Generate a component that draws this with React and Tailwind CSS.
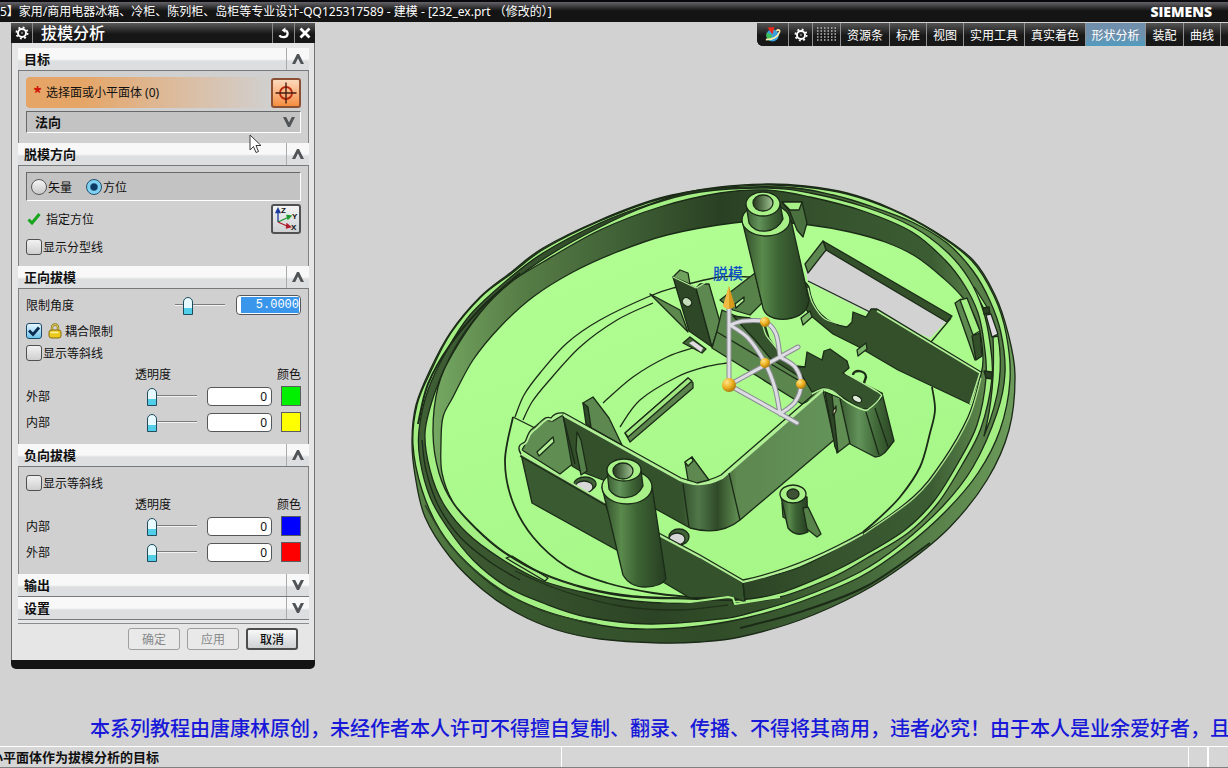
import React, { useState } from 'react';

const TOOLBAR = [
  { label: '资源条', width: 'w-[49px]' },
  { label: '标准', width: 'w-[37px]' },
  { label: '视图', width: 'w-[37px]' },
  { label: '实用工具', width: 'w-[61px]' },
  { label: '真实着色', width: 'w-[61px]' },
  { label: '形状分析', width: 'w-[60px]', active: true },
  { label: '装配', width: 'w-[38px]' },
  { label: '曲线', width: 'w-[37px]' },
];

// Smooth path through a list of points
const curve = (text, closed = false) => {
  const pts = text.trim().split(/\s+/).map((p) => p.split(',').map(Number));
  const n = pts.length;
  const at = (i) => (closed ? pts[(i + n) % n] : pts[Math.max(0, Math.min(n - 1, i))]);
  let d = `M${pts[0][0]},${pts[0][1]}`;
  for (let i = 0; i < (closed ? n : n - 1); i++) {
    const [a, b, c, e] = [at(i - 1), at(i), at(i + 1), at(i + 2)];
    d += `C${b[0] + (c[0] - a[0]) / 6},${b[1] + (c[1] - a[1]) / 6} ${c[0] - (e[0] - b[0]) / 6},${c[1] - (e[1] - b[1]) / 6} ${c[0]},${c[1]}`;
  }
  return closed ? `${d}Z` : d;
};

const OUTER =
  '767,184 805,186 847,193 890,208 934,231 973,260 995,295 1008,333 1015,375 1009,430 987,480 950,527 907,563 860,593 800,620 740,637 700,642 660,643 600,639 557,630 517,613 483,590 450,557 425,517 415,475 412,440 416,405 430,370 450,333 480,297 510,273 543,248 600,220 660,198 720,187';
const RIM =
  '767,185 805,187 847,194 890,209 934,232 972,261 994,296 1006,333 1010,380 1000,430 978,473 945,512 905,547 860,577 800,602 750,617 700,626 660,629 620,628 580,621 537,608 500,590 467,563 440,530 422,490 413,445 417,405 431,371 451,333 481,297 511,274 544,249 600,221 660,199 720,188';
const GROOVE =
  '783,187 833,195 873,207 912,222 947,243 973,271 990,301 1001,333 1005,373 997,413 973,467 943,506 900,545 860,572 800,598 750,613 720,619 650,624 587,617 543,603 507,587 473,560 447,527 430,497 420,460 419,430 428,390 447,350 470,315 505,282 543,253 600,223 650,204 700,190';
const LIP =
  '767,188 810,193 865,207 913,227 947,252 969,279 983,310 990,343 992,378 981,428 962,465 938,503 908,533 867,558 833,577 780,597 735,603 732,598 677,603 633,601 587,593 540,580 500,558 467,533 443,503 430,470 425,433 434,395 450,357 470,325 500,292 545,258 600,227 650,205 700,192';
const WALL =
  '767,190 810,197 863,211 912,232 945,260 965,286 978,313 984,343 986,378 977,425 958,463 934,501 905,530 863,556 830,573 780,593 737,600 690,599 633,597 587,589 540,573 503,552 477,530 453,503 439,473 433,433 438,387 453,353 480,313 510,283 543,262 600,230 660,207 720,193';
const FLOOR =
  '733,223 770,222 810,225 850,232 885,242 915,256 942,277 963,298 978,325 983,358 980,378 968,417 942,462 913,497 863,533 800,567 743,583 710,597 690,598 633,596 587,588 540,572 503,551 477,529 453,502 442,473 441,443 443,417 453,397 473,360 500,327 533,297 573,272 617,252 667,235';

const HANDLE = [
  'M729,385V308M729,385L797,423M729,385L798,347',
  curve('730,325 744,321 765,322 776,334 780,357'),
  curve('730,325 748,338 765,363 775,388 780,414'),
  curve('780,357 795,367 801,384 795,402 780,414'),
].join('');

const Shade = ({ id, stops, y2 = 0, x2 = 1 }) => (
  <linearGradient id={id} x1="0" y1="0" x2={x2} y2={y2}>
    {stops.map(([offset, color]) => (
      <stop key={offset} offset={offset} stopColor={color} />
    ))}
  </linearGradient>
);

const Model = () => (
  <svg viewBox="315 46 913 623" className="block h-auto w-full" role="img" aria-label="三维模型">
    <defs>
      <Shade id="outer" stops={[[0, '#5a8548'], [0.15, '#3a5a30'], [0.5, '#304c28'], [0.75, '#44683a'], [1, '#6d9c5b']]} />
      <Shade id="groove" stops={[[0, '#405f35'], [0.4, '#2c4425'], [0.6, '#35522c'], [0.85, '#5c884b'], [1, '#557c46']]} />
      <Shade id="wall" stops={[[0, '#75a862'], [0.15, '#587f47'], [0.35, '#3e5f35'], [0.52, '#2a4023'], [0.7, '#35522d'], [0.9, '#3c5d33'], [1, '#5d874c']]} />
      <Shade id="floor" x2={0.5} y2={1} stops={[[0, '#b2ff94'], [0.5, '#adfb8e'], [1, '#a6f688']]} />
      <Shade id="round" stops={[[0, '#2d4827'], [0.3, '#5a8a4c'], [0.55, '#3d6434'], [1, '#263d21']]} />
      <Shade id="tube" stops={[[0, '#3a5c31'], [0.35, '#62935a'], [0.7, '#3e6535'], [1, '#2c4626']]} />
      <Shade id="uwall" stops={[[0, '#33502b'], [0.44, '#34522c'], [0.5, '#50774a'], [0.57, '#2f4a28'], [0.64, '#5d884f'], [1, '#64935a']]} />
      <Shade id="hole" stops={[[0, '#27361f'], [0.5, '#5f7f55'], [1, '#a5c598']]} />
      <radialGradient id="gold" cx="0.35" cy="0.3" r="0.8">
        <stop offset="0" stopColor="#ffe48a" />
        <stop offset="0.5" stopColor="#eeb020" />
        <stop offset="1" stopColor="#9a6a08" />
      </radialGradient>
    </defs>

    <g stroke="#1b2b17" strokeWidth="1.3" strokeLinejoin="round">
      {/* Dish rings, outside in */}
      <path d={curve(OUTER, true)} fill="url(#outer)" />
      <path d={curve(RIM, true)} fill="#a4ef84" />
      <path d={curve(GROOVE, true)} fill="url(#groove)" />
      <path d="M993,337L998,336C1003,365 1001,395 984,436C992,405 995,375 993,337z" fill="#a4ef84" />
      <path d="M972,286L975,288 987,307 984,309z" fill="#a4ef84" />
      <path d={curve(LIP, true)} fill="#a4ef84" />
      <path d={curve(WALL, true)} fill="url(#wall)" />
      <path d={curve(FLOOR, true)} fill="url(#floor)" />

      {/* Lines on the rim */}
      <g fill="none">
        <path d={curve('422,440 426,470 438,505 460,537 490,562 520,580')} />
        <path d={curve('418,424 428,384 450,345 482,307 520,273')} strokeWidth="2" />
        <path d={curve('981,378 969,418 943,463 914,498 864,534')} stroke="#a8e38d" />
        <path d={curve('740,628 800,612 867,586 930,543')} strokeWidth="2" />
        <path d={curve('425,505 450,545 490,582 540,610 600,625')} stroke="#2a4223" />
        <path d={curve('515,571 560,590 620,606 680,610 728,605')} stroke="#203319" />
        <path d="M506,558l6,-2 36,22-3,3z" />
      </g>

      {/* Curves on the floor */}
      <g fill="none">
        <path d={curve('515,417 524,395 540,373 567,343 600,320 650,296 677,287 720,277 750,277')} />
        <path d={curve('523,420 532,402 547,383 580,347 617,320 653,303')} />
        <path d={curve('603,403 633,377 667,357 693,348')} />
        <path d={curve('620,427 640,400 677,377 705,367 727,363')} />
        <path d={curve('513,417 505,460 512,500 533,537 567,567 607,583 653,593 690,597')} strokeWidth="1.8" />
        <path d="M513,417L535,428" />
        <path d={curve('932,387 935,410 930,433 920,467 900,497 877,520 863,532')} strokeWidth="1.8" />
      </g>

      {/* Window opening */}
      <path d="M824,247L806,272 808,282 867,312 930,338 948,320z" fill="#d2d2d2" stroke="none" />
      <path d="M823,241L952,316 947,322 826,250z" fill="#33502b" />
      <path d="M823,241L805,264 808,273 826,250z" fill="#5c8850" />
      <path d="M808,281L872,313M951,318L931,342" fill="none" />

      {/* Latch on the right edge */}
      <path d="M955,303L961,299 976,334 980,357 975,360 968,340z" fill="#5d8950" />
      <path d="M960,300L967,298 980,331 973,335z" fill="#a4ef84" />
      <path d="M972,336L980,333 982,356 976,360z" fill="#33502b" />
      <path d="M986,315L991,314 998,334 992,337z" fill="#dedae0" />
      <path d="M983,308l6,-1 1,6 -6,1zM984,371l8,1 0,7 -6,-1z" fill="#2a4023" />

      {/* Rear bracket */}
      <path d="M650,294L680,310 688,332z" fill="#5c884e" />
      <path d="M673,277L680,270 688,273 690,284z" fill="#6fa25d" />
      <path d="M673,277L696,288 712,347 689,331z" fill="#2e4727" />
      <path d="M696,288L700,284 709,284 720,322 712,347z" fill="#5d8950" />
      <path d="M673,277L696,288 705,283" fill="none" stroke="#b2ef98" />
      <ellipse cx="687" cy="302" rx="5" ry="4" transform="rotate(35 687 302)" fill="#c5dcbb" />
      <path d="M683,343L690,337 706,349 702,353z" fill="#436738" />
      <path d="M689,343l4,-2 10,7-2,4z" fill="#e2dce4" stroke="none" />

      {/* Walls behind the tall boss */}
      <path d="M720,300L755,273 762,303 750,315 733,310z" fill="#578249" />
      <path d="M735,304l9,-7v4l-8,7z" fill="#b2ef98" />
      <path d="M712,348L717,331 722,310 745,320 760,336 775,356 788,365 805,367 823,388 815,398 802,404z" fill="#5b864d" />
      <path d="M733,316L750,318 765,325 769,338 783,358 797,367 805,367 818,382 800,377 770,358 755,340z" fill="#35532d" />
      <path d={curve('762,322 766,335 774,345 783,357')} stroke="#b2ef98" fill="none" />
      <path d="M717,332L803,383" fill="none" />

      {/* Long wall on the right */}
      <path d="M798,282Q804,278 809,287C812,310 826,324 847,327L852,322 853,312 866,317 871,309 877,309 981,372 970,404 898,370 857,346 833,334 810,315 803,305z" fill="#33502b" />
      <path d="M877,311L980,373 970,404" fill="none" stroke="#b2ef98" strokeWidth="1.5" />
      <path d={curve('808,288 813,304 825,319 845,325')} stroke="#b2ef98" fill="none" />
      <path d="M801,318l9,-7 2,6-9,8zM857,350l9,-7 1,6-9,7z" fill="#7db769" />

      {/* Tall boss */}
      <path d="M782,202L802,202 807,223 803,237 797,230 790,212z" fill="#49703e" />
      <path d="M782,202L802,202 799,210 790,210z" fill="#a8f088" />
      <path d="M742,220L763,308C766,319 781,321 792,318Q808,314 809,300L791,220z" fill="url(#round)" />
      <ellipse cx="766" cy="220" rx="24" ry="16" fill="#a8f088" />
      <path d="M746,204L749,223C755,235 776,234 783,219L780,204z" fill="url(#tube)" />
      <ellipse cx="763" cy="204" rx="17" ry="12" fill="#a8f088" />
      <ellipse cx="763" cy="203" rx="10" ry="8" fill="url(#hole)" />

      {/* Inner left panel and the front of the box */}
      <path d="M522,450L533,430 545,420 553,421 563,415 572,430 575,462 560,474z" fill="#5f8d52" />
      <path d="M537,452l16,-15 1,5-15,14z" fill="#b2ef98" />
      <path d="M522,452Q517,447 524,444C528,444 527,436 533,431C542,425 544,417 552,420Q556,414 563,414" fill="none" stroke="#b2ef98" strokeWidth="2" />
      <path d="M521,454Q516,446 523,443C527,443 526,434 532,429C541,423 544,415 551,418Q555,412 564,413" fill="none" />

      {/* U shaped wall */}
      <path d="M583,403L593,397 609,418 622,445 590,427z" fill="#5d8950" />
      <path d="M583,403L588,407 591,427 586,424z" fill="#2f4a28" />
      <path d="M563,415L680,480Q700,489 722,478L823,390 834,440 740,520C728,530 712,534 690,528L663,513 603,480 582,472 572,466z" fill="url(#uwall)" />
      <path d="M563,415L680,480Q700,489 722,478L823,390" fill="none" stroke="#b2ef98" strokeWidth="2.4" />
      <path d="M564,413L681,478Q700,486 721,475L822,387M729,473L740,520M683,484L689,527M563,416L575,464" fill="none" />
      <path d="M577,432L581,440 587,471 581,475 576,450z" fill="#557f49" />
      <path d="M685,462L692,457 709,480 697,483 688,480z" fill="#5d8950" />
      <path d="M685,462L692,457 693,461 688,466z" fill="#a8f088" />

      {/* Slanted bar */}
      <path d="M625,433L688,378 693,383 693,388 630,442z" fill="#5b854d" />
      <path d="M625,433L688,378 692,381 628,437z" fill="#a0e782" />

      {/* Holes through the floor */}
      <ellipse cx="585" cy="484" rx="11" ry="7" fill="#42623a" />
      <ellipse cx="584" cy="487" rx="9" ry="6" fill="#d8d8d8" />
      <ellipse cx="679" cy="537" rx="10" ry="8" fill="#42623a" />
      <ellipse cx="677" cy="539" rx="8" ry="6" fill="#d8d8d8" />

      <path d="M521,454L605,503 622,553 532,503z" fill="#3a5a31" />
      <path d="M521,454L606,503" stroke="#b2ef98" strokeWidth="2" />
      <path d="M520,456L605,505" fill="none" />

      {/* Front wall */}
      <path d="M655,533L700,557 743,583 745,602 732,597 690,598 663,582z" fill="#34522c" />
      <path d="M655,533L700,557 743,582Q800,570 863,534" fill="none" stroke="#b2ef98" strokeWidth="2" />
      <path d="M655,531L700,555 743,580Q800,568 863,532" fill="none" />
      <path d="M743,584L745,602" />
      <path d="M660,601L690,602 728,597 733,598 735,604 780,597" fill="none" stroke="#a8f088" strokeWidth="2" />

      {/* Front boss */}
      <path d="M602,487L623,575Q630,587 645,587 661,587 666,579L652,487z" fill="url(#round)" />
      <ellipse cx="627" cy="487" rx="25" ry="17" fill="#a8f088" />
      <path d="M607,470L609,489C615,501 636,501 643,486L641,470z" fill="url(#tube)" />
      <ellipse cx="624" cy="470" rx="17" ry="11" fill="#a8f088" />
      <ellipse cx="623" cy="471" rx="10" ry="8" fill="url(#hole)" />

      {/* Clip */}
      <path d="M825,392L845,400 850,443 837,453z" fill="#5f8d52" />
      <path d="M825,392L832,395 838,452 835,447z" fill="#2e4727" />
      <path d="M833,411l3,-5 0,5-3,5z" fill="#e5cfbb" />
      <path d="M840,399L882,393 894,441C888,448 884,457 875,457L850,444z" fill="url(#tube)" />
      <path d="M866,412L879,455M875,408L888,447" fill="none" />
      <path d="M797,367L805,367 807,352 822,360 824,351 830,349 847,361 849,368 843,373 880,392Q884,395 880,400L869,409 861,409 831,390 823,388 812,392z" fill="#35532d" />
      <path d={curve('812,394 823,389 832,391 847,402 864,410 870,408 880,398 878,392 845,373')} fill="none" stroke="#b2ef98" strokeWidth="1.5" />
      <path d="M853,375C853,369 866,370 866,377L864,383" fill="none" strokeWidth="2.4" />
      <ellipse cx="857" cy="399" rx="5" ry="3" transform="rotate(30 857 399)" fill="#dfeada" />

      {/* Small post */}
      <path d="M782,503L783,517 788,520z" fill="#49703e" />
      <path d="M781,497L788,528Q796,538 808,532L807,497z" fill="url(#round)" />
      <path d="M803,508L808,507 821,534 817,537 807,529z" fill="#578249" />
      <ellipse cx="793" cy="494" rx="13" ry="9" fill="#a8f088" />
      <ellipse cx="793" cy="494" rx="6" ry="5" fill="#3e5236" />
    </g>

    {/* Orientation handle */}
    <g fill="none" strokeLinecap="round">
      <path d={HANDLE} stroke="#8b8b93" strokeWidth="5" />
      <path d={HANDLE} stroke="#dcdce2" strokeWidth="3" />
    </g>
    <path d="M729,286L735,306Q729,312 723,306z" fill="#d99a1c" />
    <path d="M729,286L729,309Q725,309 723,306z" fill="#f0bb45" />
    <circle cx="729" cy="385" r="7" fill="url(#gold)" />
    <circle cx="765" cy="322" r="5" fill="url(#gold)" />
    <circle cx="765" cy="363" r="5" fill="url(#gold)" />
    <circle cx="801" cy="384" r="5" fill="url(#gold)" />
    <text x="713" y="279" fontSize="15" fill="#0a4fc4" fontWeight="500">脱模</text>
  </svg>
);

const Gear = () => (
  <svg viewBox="0 0 16 16" className="size-[14px]" fill="none" stroke="#fff">
    <circle cx="8" cy="8" r="4.6" strokeWidth="2.2" />
    <circle cx="8" cy="8" r="6.4" strokeWidth="2" strokeDasharray="2.2 2.83" />
    <circle cx="8" cy="8" r="0.8" fill="#fff" stroke="none" />
  </svg>
);

const Chevron = ({ down = false }) => (
  <svg viewBox="0 0 12 10" className="h-[10px] w-[12px]" fill="#505456">
    <path d={down ? 'M0 0H3.2L6 5.5L8.8 0H12L7 10H5z' : 'M0 10H3.2L6 4.5L8.8 10H12L7 0H5z'} />
  </svg>
);

const Section = ({ title, defaultOpen = true, children }) => {
  const [open, setOpen] = useState(defaultOpen);
  return (
    <section>
      <button
        type="button"
        onClick={() => setOpen(!open)}
        aria-expanded={open}
        className="flex h-[23px] w-full items-stretch border-b border-[#77797b] bg-linear-to-b from-[#f8f8f8] from-50% to-[#dcdedf] to-60% text-left"
      >
        <span className="flex-1 pl-[6px] text-[13px] leading-[22px] font-bold">{title}</span>
        <span className="flex w-[23px] items-center justify-center border-l border-[#a9abad]">
          <Chevron down={!open} />
        </span>
      </button>
      {open && (
        <div className="flex flex-col border-x border-[#808284] bg-[#d0d0d0] px-[7px]">{children}</div>
      )}
    </section>
  );
};

const Check = ({ label, defaultChecked = false, icon }) => (
  <label className="flex h-4 items-center gap-px">
    <span className="grid size-4">
      <input
        type="checkbox"
        defaultChecked={defaultChecked}
        className="peer col-start-1 row-start-1 size-4 appearance-none rounded-[3px] border border-[#4e5052] bg-linear-to-b from-[#f2f2f2] to-[#cfcfcf] checked:border-[#1c4868] checked:from-[#e4f6ff] checked:to-[#6cc4ea]"
      />
      <svg viewBox="0 0 16 16" className="pointer-events-none invisible col-start-1 row-start-1 size-4 peer-checked:visible" fill="none" stroke="#0b2c50" strokeWidth="2.8">
        <path d="M3 7.5L7 11.5L13 4.5" />
      </svg>
    </span>
    {icon}
    <span>{label}</span>
  </label>
);

const Radio = ({ label, defaultChecked = false }) => (
  <label className="flex items-center gap-[1px]">
    <input
      type="radio"
      name="direction"
      defaultChecked={defaultChecked}
      className="size-4 appearance-none rounded-full border border-[#55585a] bg-linear-to-b from-[#f4f4f4] to-[#c9c9c9] checked:border-[#23506e] checked:bg-radial checked:from-[#0c3c66] checked:from-30% checked:to-[#7fd2f2] checked:to-45%"
    />
    <span>{label}</span>
  </label>
);

const Slider = ({ label, value }) => (
  <input
    type="range"
    aria-label={label}
    min="0"
    max="100"
    defaultValue={value}
    className="h-5 w-[50px] appearance-none bg-transparent [&::-webkit-slider-runnable-track]:h-[2px] [&::-webkit-slider-runnable-track]:border-t [&::-webkit-slider-runnable-track]:border-[#7a7c7e] [&::-webkit-slider-runnable-track]:bg-[#f2f2f2] [&::-webkit-slider-thumb]:-mt-[8px] [&::-webkit-slider-thumb]:h-[18px] [&::-webkit-slider-thumb]:w-[10px] [&::-webkit-slider-thumb]:appearance-none [&::-webkit-slider-thumb]:rounded-t-full [&::-webkit-slider-thumb]:rounded-b-[2px] [&::-webkit-slider-thumb]:border [&::-webkit-slider-thumb]:border-[#1f4b5e] [&::-webkit-slider-thumb]:bg-linear-to-b [&::-webkit-slider-thumb]:from-[#e6faff] [&::-webkit-slider-thumb]:from-60% [&::-webkit-slider-thumb]:to-[#52cfe8] [&::-webkit-slider-thumb]:to-65%"
  />
);

const ColorRows = ({ rows }) => (
  <div className="mt-[5px] flex flex-col pb-3">
    <div className="mb-1 flex h-4 items-center justify-end leading-4">
      <span className="mr-[106px]">透明度</span>
      <span>颜色</span>
    </div>
    <div className="flex flex-col gap-[6px]">
      {rows.map(([label, swatch]) => (
        <div key={label} className="flex h-5 items-center">
          <span className="flex-1">{label}</span>
          <Slider label={`${label}透明度`} value="0" />
          <input
            type="text"
            aria-label={label}
            defaultValue="0"
            className="mr-[9px] ml-[10px] h-[19px] w-[65px] rounded-[4px] border border-[#55585a] bg-white pr-1 text-right font-['Noto_Sans',sans-serif] text-[12px]"
          />
          <button type="button" aria-label={`${label}颜色`} className={`size-5 border border-[#5a5c5e] ${swatch}`} />
        </div>
      ))}
    </div>
  </div>
);

const Lock = () => (
  <svg viewBox="0 0 14 16" className="mr-[2px] ml-[5px] h-4 w-[14px]">
    <path d="M4 8V4.500a3 3 0 0 1 6 0V8" fill="none" stroke="#8d7a1a" strokeWidth="2.4" />
    <path d="M4 8V4.500a3 3 0 0 1 6 0V8" fill="none" stroke="#e8d464" strokeWidth="1" />
    <path d="M1 9Q1 7 4 7h6q3 0 3 2v4q0 2-3 2H4q-3 0-3-2z" fill="#ecc91e" stroke="#8a6c0a" />
    <path d="M2.500 9.500h8" stroke="#fff3a0" strokeWidth="1.500" />
  </svg>
);

const Dialog = () => (
  <aside className="relative ml-[11px] flex w-[304px] shrink-0 flex-col self-start pt-px">
    <div className="flex h-[20px] items-stretch bg-linear-to-b from-[#5b5b5b] to-[#161616] to-55% text-white">
      <button type="button" aria-label="选项" className="flex w-[22px] items-center justify-center border-r border-[#8a8a8a]">
        <Gear />
      </button>
      <h2 className="flex-1 pl-2 text-[16px] leading-[18px] font-medium">拔模分析</h2>
      <button type="button" aria-label="重置" className="flex w-[22px] items-center justify-center border-l border-[#8a8a8a]">
        <svg viewBox="0 0 14 14" className="size-[13px]" fill="none" stroke="#fff" strokeWidth="2.4">
          <path d="M8 3.500C13 4 12.500 11 7 11Q4 11 2.500 9" />
          <path d="M5 3.500L9 0.500V6.500z" fill="#fff" stroke="none" />
        </svg>
      </button>
      <button type="button" aria-label="关闭" className="flex w-[21px] items-center justify-center border-l border-[#8a8a8a]">
        <svg viewBox="0 0 12 12" className="size-[12px]" stroke="#fff" strokeWidth="2.800">
          <path d="M1.500 1.500L10.500 10.500M10.500 1.500L1.500 10.500" />
        </svg>
      </button>
    </div>

    <div className="border-x border-[#707274] bg-[#e6e6e6] pt-[5px] pr-[5px] pb-[10px] pl-[6px]">
      <Section title="目标">
        <div className="mt-[6px] flex h-[31px] items-center rounded-[4px] bg-linear-to-r from-[#e5a566] from-20% to-[#d0d0d0] to-90%">
          <span className="w-[20px] pl-[7px] text-[18px] leading-[20px] font-bold text-[#d01808]">*</span>
          <span className="flex-1 font-['Noto_Sans','Noto_Sans_CJK_SC',sans-serif]">选择面或小平面体 (0)</span>
          <button type="button" aria-label="选择面" className="flex size-[30px] items-center justify-center rounded-[3px] border-2 border-[#8c5034] bg-linear-to-b from-[#fbd9bb] to-[#f58d3c]">
            <svg viewBox="0 0 24 24" className="size-6" fill="none">
              <circle cx="12" cy="12" r="6" stroke="#b8280c" strokeWidth="1.800" />
              <path d="M12 1.500V22.500M1.500 12H22.500" stroke="#4a1c10" strokeWidth="1.400" />
            </svg>
          </button>
        </div>
        <div className="mt-[3px] mb-[10px] grid h-[22px] items-center">
          <select
            aria-label="方向类型"
            className="col-start-1 row-start-1 h-[22px] w-full appearance-none border border-t-[#66686a] border-r-white border-b-white border-l-[#66686a] bg-[#c3c3c3] pl-[8px] text-[13px] font-bold"
          >
            <option>法向</option>
          </select>
          <span className="pointer-events-none col-start-1 row-start-1 mr-[6px] justify-self-end">
            <Chevron down />
          </span>
        </div>
      </Section>

      <Section title="脱模方向">
        <div className="mt-[6px] flex h-[29px] items-center gap-[14px] border border-t-[#66686a] border-r-white border-b-white border-l-[#66686a] bg-[#c3c3c3] pl-1">
          <Radio label="矢量" />
          <Radio label="方位" defaultChecked />
        </div>
        <div className="mt-[3px] flex h-[30px] items-center">
          <svg viewBox="0 0 14 14" className="mr-[5px] ml-[1px] size-[14px]" fill="none" stroke="#15a51c" strokeWidth="3">
            <path d="M1.500 7.500L5 11L12.500 2" />
          </svg>
          <span className="flex-1">指定方位</span>
          <button type="button" aria-label="坐标系" className="flex size-[30px] items-center justify-center rounded-[3px] border-2 border-[#505254] bg-linear-to-b from-[#f4f4f4] to-[#cfd1d3]">
            <svg viewBox="0 0 26 26" className="size-[26px]" fill="none" strokeWidth="1.300">
              <path d="M5 16V4M3 6.500L5 2.500L7 6.500z" stroke="#1c3c9c" fill="#1c3c9c" />
              <path d="M5 16L16 11M14 9.500L18 10L15 13z" stroke="#1a9a2c" fill="#1a9a2c" />
              <path d="M5 16L15 20.500M14 18L17.500 21L13.500 22z" stroke="#b01c2c" fill="#b01c2c" />
              <g fill="#111" stroke="none" fontSize="8" fontWeight="700" fontFamily="Liberation Sans">
                <text x="8" y="7">Z</text>
                <text x="19" y="13">Y</text>
                <text x="18" y="24">X</text>
              </g>
            </svg>
          </button>
        </div>
        <div className="mt-[5px] mb-[11px]">
          <Check label="显示分型线" />
        </div>
      </Section>

      <Section title="正向拔模">
        <div className="mt-[6px] flex h-5 items-center">
          <label htmlFor="angle" className="flex-1">限制角度</label>
          <Slider label="限制角度" value="20" />
          <div className="ml-[11px] flex h-5 w-[65px] rounded-[4px] border border-[#55585a] bg-white py-px pr-px pl-1">
            <input id="angle" type="text" defaultValue="5.0000" className="h-full w-full bg-[#3a96ea] text-right font-['Liberation_Mono',monospace] text-[12px] text-white" />
          </div>
        </div>
        <div className="mt-2 flex flex-col gap-[6px]">
          <Check label="耦合限制" defaultChecked icon={<Lock />} />
          <Check label="显示等斜线" />
        </div>
        <ColorRows rows={[['外部', 'bg-[#00f000]'], ['内部', 'bg-[#ffff00]']]} />
      </Section>

      <Section title="负向拔模">
        <div className="mt-2">
          <Check label="显示等斜线" />
        </div>
        <ColorRows rows={[['内部', 'bg-[#0000ff]'], ['外部', 'bg-[#ff0000]']]} />
      </Section>

      <Section title="输出" defaultOpen={false} />
      <Section title="设置" defaultOpen={false} />

      <div className="mt-[3px] flex justify-end gap-[7px] border-t border-[#8b8d8f] pt-1 pr-[11px]">
        <button type="button" disabled className="h-[22px] w-[52px] rounded-[3px] border border-[#9c9ea0] bg-[#e9e9e9] text-[#87898b]">确定</button>
        <button type="button" disabled className="h-[22px] w-[52px] rounded-[3px] border border-[#9c9ea0] bg-[#e9e9e9] text-[#87898b]">应用</button>
        <button type="button" className="h-[22px] w-[52px] rounded-[3px] border-2 border-[#4b4d4f] bg-linear-to-b from-[#f8f8f8] to-[#cfd1d3] leading-none font-medium">取消</button>
      </div>
    </div>
    <div className="h-[9px] rounded-b-[5px] bg-[#141414]" />

    {/* Mouse pointer */}
    <svg viewBox="0 0 14 20" className="pointer-events-none absolute top-[112px] left-[238px] h-5 w-[14px]">
      <path d="M1 1V16L4.500 12.500L7 18.500L9.500 17.500L7 11.500H12z" fill="#fff" stroke="#3a3a3a" />
    </svg>
  </aside>
);

const Toolbar = () => (
  <nav className="mt-px flex h-[23px] w-[471px] max-w-full items-stretch self-end overflow-hidden rounded-bl-[6px] bg-[#1a1a1a] text-white">
    <button type="button" aria-label="开始" className="flex w-[32px] shrink-0 items-center justify-center border-r border-[#909090] bg-linear-to-b from-[#555] to-[#181818] to-55%">
      <svg viewBox="0 0 18 18" className="size-[17px]">
        <circle cx="9" cy="10" r="6.500" fill="#3aa0dc" />
        <path d="M3 7L9 10L6 16Q1 12 3 7z" fill="#3fc054" />
        <path d="M3.500 1.500L11 1L9 9z" fill="#e8281a" />
        <path d="M2 14.500Q14 14 16.500 6Q17 3 13 5" fill="none" stroke="#fff0b0" strokeWidth="1.800" />
      </svg>
    </button>
    <button type="button" aria-label="设置" className="flex w-[24px] shrink-0 items-center justify-center border-r border-[#909090] bg-linear-to-b from-[#555] to-[#181818] to-55%">
      <Gear />
    </button>
    <button type="button" aria-label="栅格" className="flex w-[28px] shrink-0 items-center justify-center border-r border-[#909090] bg-linear-to-b from-[#555] to-[#181818] to-55%">
      <svg viewBox="0 0 20 17" className="h-[17px] w-5" stroke="#b9b9b9" strokeWidth="1.500" strokeDasharray="1.500 2">
        <path d="M0 2H20M0 5H20M0 8H20M0 11H20M0 14H20" />
      </svg>
    </button>
    {TOOLBAR.map((item) => (
      <button
        key={item.label}
        type="button"
        className={`shrink-0 border-r border-[#909090] bg-linear-to-b text-center text-[12px] leading-[22px] whitespace-nowrap ${item.width} ${
          item.active ? 'from-[#6f8fac] from-50% to-[#4f9cc0]' : 'from-[#555] to-[#181818] to-55%'
        }`}
      >
        {item.label}
      </button>
    ))}
    <div className="flex-1 bg-linear-to-b from-[#555] to-[#181818] to-55%" />
  </nav>
);

const App = () => (
  <div className="flex min-h-screen flex-col overflow-hidden bg-[#d2d2d2] font-['Noto_Sans_CJK_SC',sans-serif] text-[12px] leading-[16px] text-[#101010]">
    <header className="flex h-[22px] items-center justify-between border-t-2 border-[#08080c] bg-linear-to-b from-[#66646a] to-[#141414] to-45% pr-[16px] text-white">
      <h1 className="truncate font-['Noto_Sans','Noto_Sans_CJK_SC',sans-serif] text-[12px] leading-[18px]">5】家用/商用电器冰箱、冷柜、陈列柜、岛柜等专业设计-QQ125317589 - 建模 - [232_ex.prt （修改的）]</h1>
      <span className="font-['Open_Sans',sans-serif] text-[14px] leading-[18px] font-extrabold">SIEMENS</span>
    </header>

    <main className="flex items-start">
      <Dialog />
      <div className="flex min-w-0 flex-1 flex-col">
        <Toolbar />
        <Model />
      </div>
    </main>

    <div className="flex flex-1 items-end overflow-hidden pb-1 pl-[90px]">
      <p className="text-[20px] leading-[28px] font-medium whitespace-nowrap text-[#1818d8]">
        本系列教程由唐康林原创，未经作者本人许可不得擅自复制、翻录、传播、不得将其商用，违者必究！由于本人是业余爱好者，且
      </p>
    </div>

    <footer className="flex h-[22px] items-stretch overflow-hidden border-t border-b border-t-white border-b-[#808080] bg-[#d6d6d6]">
      <p className="-ml-[10px] w-[571px] text-[13px] leading-[20px] font-bold whitespace-nowrap">小平面体作为拔模分析的目标</p>
      <div className="flex-1 border-l border-white" />
      <div className="w-[19px] border-l border-white" />
      <div className="w-[21px] border-l-2 border-white" />
    </footer>
  </div>
);

export default App;
